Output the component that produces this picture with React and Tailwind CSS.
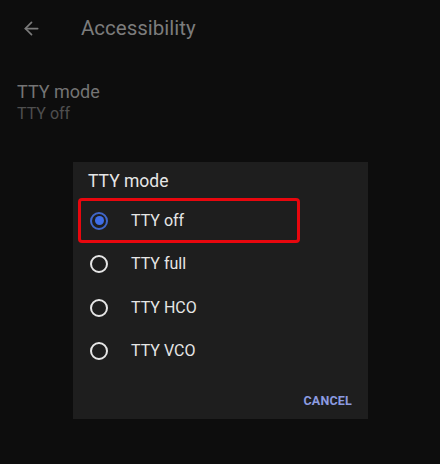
import { ArrowLeft } from "lucide-react";

const options = ["TTY off", "TTY full", "TTY HCO", "TTY VCO"];

function Radio({ checked }) {
  return (
    <span
      className={`flex h-[18px] w-[18px] items-center justify-center rounded-full border-2 ${
        checked ? "border-[#4066c9]" : "border-[#e6e6e6]"
      }`}
    >
      {checked && <span className="h-[9px] w-[9px] rounded-full bg-[#3f6ee8]" />}
    </span>
  );
}

export default function App() {
  return (
    <div className="h-[464px] w-[440px] overflow-hidden bg-[#0d0d0d] font-['Roboto',sans-serif]">
      {/* dimmed settings page behind the dialog */}
      <div className="flex h-[56px] items-center">
        <ArrowLeft className="ml-[21px] h-[21px] w-[21px] text-[#7a7a7a]" strokeWidth={2} />
        <span className="ml-[39px] text-[20.5px] text-[#7c7c7c]">Accessibility</span>
      </div>
      <div className="mt-[25px] pl-[17px]">
        <div className="text-[18px] leading-[22px] text-[#747474]">TTY mode</div>
        <div className="mt-[1px] text-[16px] leading-[20px] text-[#4f4f4f]">TTY off</div>
      </div>

      {/* dialog */}
      <div className="relative ml-[73px] mt-[38px] h-[257px] w-[295px] bg-[#1e1e1e]">
        <div className="pl-[15px] pt-[7px] text-[17.5px] leading-[24px] text-[#e6e6e6]">TTY mode</div>
        <div className="mt-[6px]">
          {options.map((opt, i) => (
            <div key={opt} className="flex h-[43.5px] items-center">
              <span className="ml-[17px]">
                <Radio checked={i === 0} />
              </span>
              <span className="ml-[23px] text-[16px] text-[#e6e6e6]">{opt}</span>
            </div>
          ))}
        </div>
        <div className="absolute bottom-[10px] right-[16px] text-[12.5px] font-bold leading-[16px] tracking-[0.2px] text-[#8c9be0]">
          CANCEL
        </div>

        {/* annotation highlight */}
        <div className="absolute left-[5px] top-[36px] h-[45px] w-[222px] rounded-[4px] border-[3px] border-[#e8070e]" />
      </div>
    </div>
  );
}
